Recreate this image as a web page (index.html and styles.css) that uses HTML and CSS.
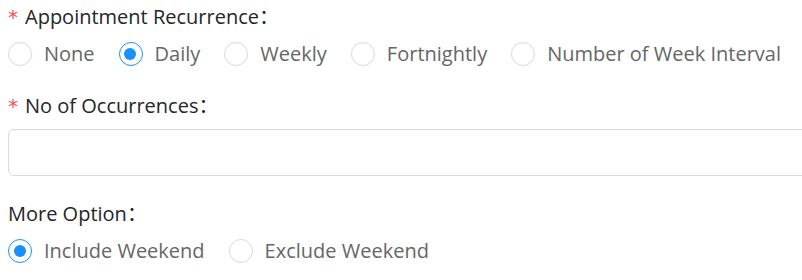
FILE: index.html
```html
<!DOCTYPE html>
<html>
<head>
    <meta charset="utf-8">
    <title>Appointment</title>
    <link rel="stylesheet" href="styles.css">
</head>
<body>

<form class="form">
    <div class="form-item">
        <div class="form-label required">Appointment Recurrence：</div>
        <div class="radio-group">
            <label class="radio"><span class="radio-inner"></span><span class="radio-text">None</span></label>
            <label class="radio checked"><span class="radio-inner"></span><span class="radio-text">Daily</span></label>
            <label class="radio"><span class="radio-inner"></span><span class="radio-text">Weekly</span></label>
            <label class="radio"><span class="radio-inner"></span><span class="radio-text">Fortnightly</span></label>
            <label class="radio"><span class="radio-inner"></span><span class="radio-text">Number of Week Interval</span></label>
        </div>
    </div>

    <div class="form-item item-occ">
        <div class="form-label required">No of Occurrences：</div>
        <input class="input" type="text">
    </div>

    <div class="form-item item-more">
        <div class="form-label">More Option：</div>
        <div class="radio-group">
            <label class="radio checked"><span class="radio-inner"></span><span class="radio-text">Include Weekend</span></label>
            <label class="radio"><span class="radio-inner"></span><span class="radio-text">Exclude Weekend</span></label>
        </div>
    </div>
</form>

</body>
</html>
```

FILE: styles.css
```css
*{
    padding: 0;
    margin: 0;
    box-sizing: border-box;
}

body{
    overflow: hidden;
    background: #fff;
    font-family: "Open Sans", "Noto Sans CJK SC", sans-serif;
    font-size: 20px;
}

.form{
    width: 900px;
    padding: 0 8px;
}

.form-label{
    height: 34px;
    line-height: 34px;
    color: #262626;
}

/*必填项前面的红色星号*/
.form-label.required::before{
    content: "*";
    display: inline-block;
    margin-right: 7px;
    color: #ff4d4f;
    font-family: "DejaVu Sans", sans-serif;
    font-size: 20px;
}

.radio-group{
    display: flex;
    height: 34px;
    margin-top: 3px;
    align-items: center;
}

.radio{
    display: inline-flex;
    align-items: center;
    margin-right: 12px;
    cursor: pointer;
}

.radio-inner{
    position: relative;
    width: 24px;
    height: 24px;
    border: 1.5px solid #d9d9d9;
    border-radius: 50%;
    background: #fff;
}

.radio.checked .radio-inner{
    border-color: #1890ff;
}

.radio.checked .radio-inner::after{
    content: "";
    position: absolute;
    left: 4.5px;
    top: 4.5px;
    width: 12px;
    height: 12px;
    border-radius: 50%;
    background: #1890ff;
}

.radio-text{
    padding: 0 12px;
    color: #666;
    line-height: 34px;
}

.item-occ{
    margin-top: 18px;
}

.input{
    display: block;
    width: 100%;
    height: 47px;
    margin-top: 6px;
    border: 1.5px solid #d9d9d9;
    border-radius: 6px;
    outline: none;
    font: inherit;
}

.item-more{
    margin-top: 21px;
}
```
